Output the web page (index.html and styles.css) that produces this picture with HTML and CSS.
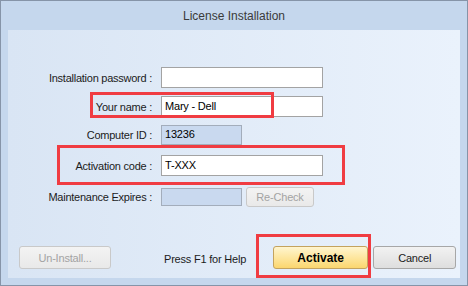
FILE: index.html
```html
<!DOCTYPE html>
<html>
<head>
<meta charset="utf-8">
<title>License Installation</title>
<link rel="stylesheet" href="styles.css">
</head>
<body>
<div class="window">
  <div class="titlebar">License Installation</div>
  <div class="panel">
    <div class="form">
      <div class="row r1">
        <div class="label">Installation password :</div>
        <div class="field"></div>
      </div>
      <div class="row r2">
        <div class="label">Your name :</div>
        <div class="field">Mary - Dell</div>
      </div>
      <div class="row r3">
        <div class="label">Computer ID :</div>
        <div class="field readonly short">13236</div>
      </div>
      <div class="row r4">
        <div class="label">Activation code :</div>
        <div class="field">T-XXX</div>
      </div>
      <div class="row r5">
        <div class="label">Maintenance Expires :</div>
        <div class="field readonly short small"></div>
        <div class="btn disabled recheck">Re-Check</div>
      </div>
    </div>
    <div class="bottom">
      <div class="btn disabled uninstall">Un-Install...</div>
      <div class="help">Press F1 for Help</div>
      <div class="btn primary activate">Activate</div>
      <div class="btn cancel">Cancel</div>
    </div>
    <div class="mark mark-name"></div>
    <div class="mark mark-code"></div>
    <div class="mark mark-activate"></div>
  </div>
</div>
</body>
</html>
```

FILE: styles.css
```css
html, body {
  margin: 0;
  padding: 0;
  background: #ffffff;
}

body {
  font-family: "Liberation Sans", Arial, sans-serif;
  font-size: 11px;
  color: #1b1b1b;
}

.window {
  width: 468px;
  height: 286px;
  box-sizing: border-box;
  border: 1px solid #8694a8;
  background: #c5d7ed;
  display: flex;
  flex-direction: column;
  padding: 0 7px;
}

.titlebar {
  height: 29px;
  line-height: 30px;
  text-align: center;
  font-size: 12px;
  color: #3a3a3a;
  flex: none;
}

.panel {
  position: relative;
  width: 452px;
  height: 248px;
  background: linear-gradient(to right, #d9e5f4, #eaf2fc);
  flex: none;
}

.form {
  padding-top: 37px;
  display: flex;
  flex-direction: column;
}

.row {
  display: flex;
  align-items: center;
  height: 21px;
}

.r2, .r3 { margin-top: 8px; }
.r3 { height: 20px; }
.r4 { margin-top: 10px; }
.r5 { margin-top: 11px; height: 20px; }

.label {
  width: 144px;
  margin-right: 9px;
  text-align: right;
  letter-spacing: -0.25px;
  white-space: nowrap;
}

.field {
  width: 162px;
  height: 21px;
  box-sizing: border-box;
  border: 1px solid #a3a3a3;
  background: #ffffff;
  padding: 0 3px;
  line-height: 18px;
  color: #000;
  letter-spacing: -0.2px;
}

.field.readonly {
  background: #c9d9ef;
  border-color: #a3adbb;
}

.field.short {
  width: 81px;
  height: 20px;
  line-height: 17px;
}

.field.small {
  height: 18px;
}

.btn {
  box-sizing: border-box;
  display: flex;
  align-items: center;
  justify-content: center;
  border: 1px solid #a7a7a7;
  border-radius: 3px;
  background: linear-gradient(#f2f2f2, #dedede);
  color: #1b1b1b;
  letter-spacing: -0.2px;
}

.btn.disabled {
  border-color: #c9c9c9;
  background: linear-gradient(#f3f3f3, #e9e9e9);
  color: #a3a3a3;
}

.recheck {
  width: 68px;
  height: 20px;
  margin-left: 4px;
}

.bottom {
  margin-top: 39px;
  display: flex;
  align-items: center;
  height: 23px;
}

.uninstall {
  width: 92px;
  height: 23px;
  margin-left: 11px;
}

.help {
  margin-left: 53px;
  padding-top: 3px;
  letter-spacing: -0.2px;
  white-space: nowrap;
}

.activate {
  width: 95px;
  height: 23px;
  margin-left: 27px;
  font-weight: bold;
  font-size: 12px;
  letter-spacing: 0;
  color: #000;
  border-color: #c4a35e;
  background: linear-gradient(#fff5cf, #fde59a 55%, #fbd66f);
}

.cancel {
  width: 83px;
  height: 23px;
  margin-left: 5px;
}

.mark {
  position: absolute;
  box-sizing: border-box;
  border: 3px solid #f03c42;
  pointer-events: none;
}

.mark-name {
  left: 82px;
  top: 62px;
  width: 184px;
  height: 26px;
}

.mark-code {
  left: 49px;
  top: 115px;
  width: 288px;
  height: 40px;
}

.mark-activate {
  left: 248px;
  top: 204px;
  width: 115px;
  height: 44px;
}
```
